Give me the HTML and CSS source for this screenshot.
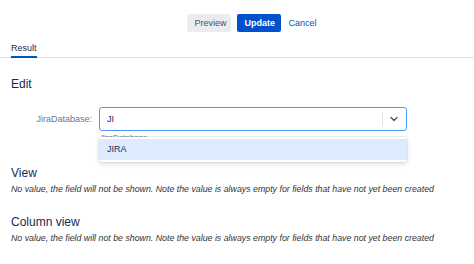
FILE: index.html
```html
<!DOCTYPE html>
<html lang="en">
<head>
    <meta charset="UTF-8">
    <title>Field</title>
    <link rel="stylesheet" href="styles.css">
</head>
<body>
    <div class="toolbar">
      <button class="btn btn-default">Preview</button>
      <button class="btn btn-primary">Update</button>
      <a class="btn btn-link" href="#">Cancel</a>
    </div>

    <div class="tabs">
      <span class="tab active">Result</span>
    </div>

    <div class="panel">
      <h3 class="section-title title-edit">Edit</h3>
      <div class="field-row">
        <label class="field-label">JiraDatabase:</label>
        <div class="select-wrap">
          <div class="select">
            <span class="select-value">JI</span>
            <span class="select-sep"></span>
            <svg class="select-arrow" width="10" height="10" viewBox="0 0 10 10">
              <path d="M2 3.5 L5 6.5 L8 3.5" fill="none" stroke="#42526e" stroke-width="1.4" stroke-linecap="round" stroke-linejoin="round"/>
            </svg>
          </div>
          <div class="help">JiraDatabase</div>
          <div class="menu">
            <div class="option focused">JIRA</div>
          </div>
        </div>
      </div>

      <h3 class="section-title title-view">View</h3>
      <p class="note">No value, the field will not be shown. Note the value is always empty for fields that have not yet been created</p>

      <h3 class="section-title">Column view</h3>
      <p class="note">No value, the field will not be shown. Note the value is always empty for fields that have not yet been created</p>
    </div>
</body>
</html>
```

FILE: styles.css
```css
body {
    margin: 0;
    background-color: #fff;
    font-family: "Liberation Sans", Arial, sans-serif;
    color: #172b4d;
}

.toolbar {
    display: flex;
    justify-content: center;
    align-items: center;
    gap: 6px;
    padding: 14px 0 0 31px;
}

.btn {
    box-sizing: border-box;
    height: 18px;
    padding: 0 7px;
    border: none;
    border-radius: 2px;
    font-family: inherit;
    font-size: 9px;
    line-height: 18px;
    text-decoration: none;
}

.btn-default {
    width: 44px;
    background-color: #ebecf0;
    color: #42526e;
}

.btn-primary {
    width: 44px;
    background-color: #0052cc;
    color: #fff;
    font-weight: bold;
}

.btn-link {
    padding: 0 1px;
    color: #0052cc;
}

.tabs {
    display: flex;
    margin-top: 10px;
    padding-left: 11px;
    border-bottom: 1px solid #dfe1e6;
}

.tab {
    font-size: 9px;
    line-height: 12px;
    padding-bottom: 2px;
    margin-bottom: -1px;
    color: #172b4d;
}

.tab.active {
    border-bottom: 2px solid #0052cc;
}

.panel {
    padding: 0 11px;
}

.section-title {
    margin: 20px 0 0;
    font-size: 12px;
    line-height: 14px;
    font-weight: normal;
    color: #172b4d;
}

.title-edit {
    margin-top: 19px;
}

.title-view {
    margin-top: 23px;
}

.field-row {
    display: flex;
    align-items: flex-start;
    margin-top: 16px;
}

.field-label {
    width: 81px;
    text-align: right;
    padding-right: 7px;
    font-size: 9px;
    line-height: 24px;
    color: #6b778c;
}

.select-wrap {
    position: relative;
    width: 308px;
}

.select {
    box-sizing: border-box;
    display: flex;
    align-items: center;
    height: 24px;
    border: 1.5px solid #4c9aff;
    border-radius: 3px;
    padding: 0 5px 0 7px;
}

.select-value {
    flex: 1;
    font-size: 9px;
    color: #172b4d;
}

.select-sep {
    width: 1px;
    height: 14px;
    background-color: #dfe1e6;
    margin-right: 6px;
}

.select-arrow {
    margin-right: 2px;
}

.help {
    height: 10px;
    padding: 2px 0 0 1px;
    font-size: 8px;
    line-height: 9px;
    color: #6b778c;
}

.menu {
    position: absolute;
    top: 30px;
    left: 0;
    right: 0;
    padding: 2px 0;
    background-color: #fff;
    border-radius: 3px;
    box-shadow: 0 0 0 1px rgba(9, 30, 66, 0.06), 0 2px 5px rgba(9, 30, 66, 0.15);
}

.option {
    height: 21px;
    padding-left: 8px;
    font-size: 9px;
    line-height: 21px;
    color: #172b4d;
}

.option.focused {
    background-color: #deebff;
}

.note {
    margin: 3px 0 0;
    font-size: 8.8px;
    line-height: 12px;
    font-style: italic;
    color: #333;
}
```
